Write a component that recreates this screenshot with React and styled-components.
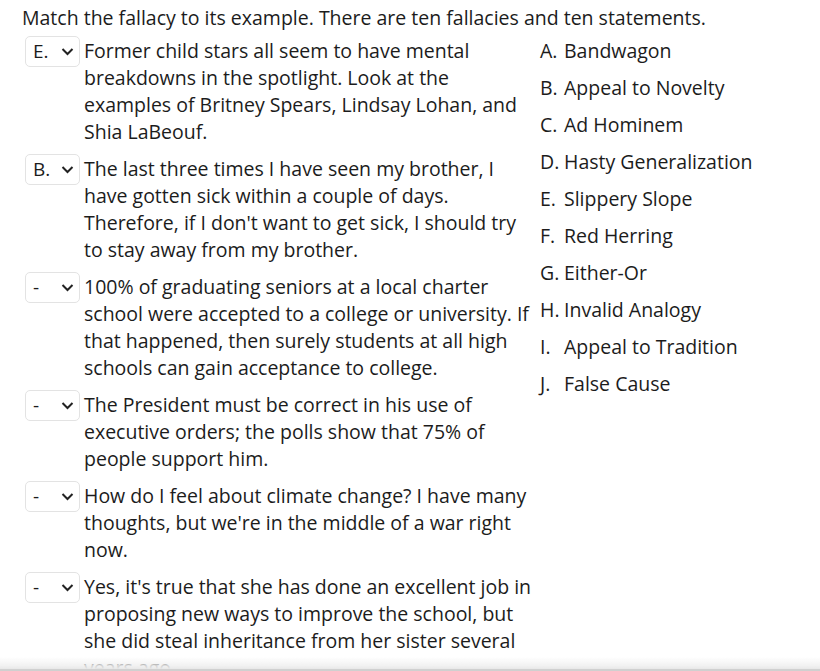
import React from "react";
import styled, { createGlobalStyle } from "styled-components";

const Global = createGlobalStyle`
  html, body { margin: 0; padding: 0; background: #fff; }
  body { font-family: "Open Sans", "Liberation Sans", sans-serif; color: #1c1c1c; overflow: hidden; }
`;

const Page = styled.div`
  padding: 4px 0 0 22px;
  font-size: 19.5px;
  line-height: 27px;
`;

const Heading = styled.div`
  margin-bottom: 6px;
  white-space: nowrap;
`;

const Columns = styled.div`
  display: flex;
  align-items: flex-start;
`;

const Statements = styled.div`
  width: 518px;
  display: flex;
  flex-direction: column;
  gap: 10px;
`;

const Row = styled.div`
  display: flex;
  align-items: flex-start;
`;

const SelectBox = styled.div`
  position: relative;
  box-sizing: border-box;
  width: 55px;
  height: 31px;
  margin: -1px 4px 0 3px;
  border: 1px solid #e3e3e3;
  border-radius: 5px;
  background: #fff;
  flex-shrink: 0;
  display: flex;
  align-items: center;
  padding-left: 7px;
  font-size: 19px;
`;

const Chevron = styled.svg`
  position: absolute;
  right: 5px;
  top: 10px;
`;

const Text = styled.div`
  width: 448px;
`;

const Options = styled.div`
  display: flex;
  flex-direction: column;
  gap: 10px;
`;

const Option = styled.div`
  display: flex;
`;

const Letter = styled.span`
  width: 24px;
  flex-shrink: 0;
`;

const BottomShade = styled.div`
  position: fixed;
  left: 0;
  right: 0;
  bottom: 0;
  height: 14px;
  background: linear-gradient(to bottom, rgba(255,255,255,0) 0%, rgba(240,240,240,0.85) 70%, #e8e8e8 100%);
  border-bottom: 2px solid #d0d0d0;
  box-sizing: border-box;
`;

const statements = [
  ["E.", "Former child stars all seem to have mental breakdowns in the spotlight. Look at the examples of Britney Spears, Lindsay Lohan, and Shia LaBeouf."],
  ["B.", "The last three times I have seen my brother, I have gotten sick within a couple of days. Therefore, if I don't want to get sick, I should try to stay away from my brother."],
  ["-", "100% of graduating seniors at a local charter school were accepted to a college or university. If that happened, then surely students at all high schools can gain acceptance to college."],
  ["-", "The President must be correct in his use of executive orders; the polls show that 75% of people support him."],
  ["-", "How do I feel about climate change? I have many thoughts, but we're in the middle of a war right now."],
  ["-", "Yes, it's true that she has done an excellent job in proposing new ways to improve the school, but she did steal inheritance from her sister several years ago."],
];

const options = [
  ["A.", "Bandwagon"],
  ["B.", "Appeal to Novelty"],
  ["C.", "Ad Hominem"],
  ["D.", "Hasty Generalization"],
  ["E.", "Slippery Slope"],
  ["F.", "Red Herring"],
  ["G.", "Either-Or"],
  ["H.", "Invalid Analogy"],
  ["I.", "Appeal to Tradition"],
  ["J.", "False Cause"],
];

export default function App() {
  return (
    <>
      <Global />
      <Page>
        <Heading>Match the fallacy to its example. There are ten fallacies and ten statements.</Heading>
        <Columns>
          <Statements>
            {statements.map(([v, t], i) => (
              <Row key={i}>
                <SelectBox>
                  {v}
                  <Chevron width="13" height="9" viewBox="0 0 13 9">
                    <path d="M1.5 2 L6.5 7 L11.5 2" fill="none" stroke="#222" strokeWidth="2" />
                  </Chevron>
                </SelectBox>
                <Text>{t}</Text>
              </Row>
            ))}
          </Statements>
          <Options>
            {options.map(([l, n]) => (
              <Option key={l}>
                <Letter>{l}</Letter>
                <span>{n}</span>
              </Option>
            ))}
          </Options>
        </Columns>
      </Page>
      <BottomShade />
    </>
  );
}
